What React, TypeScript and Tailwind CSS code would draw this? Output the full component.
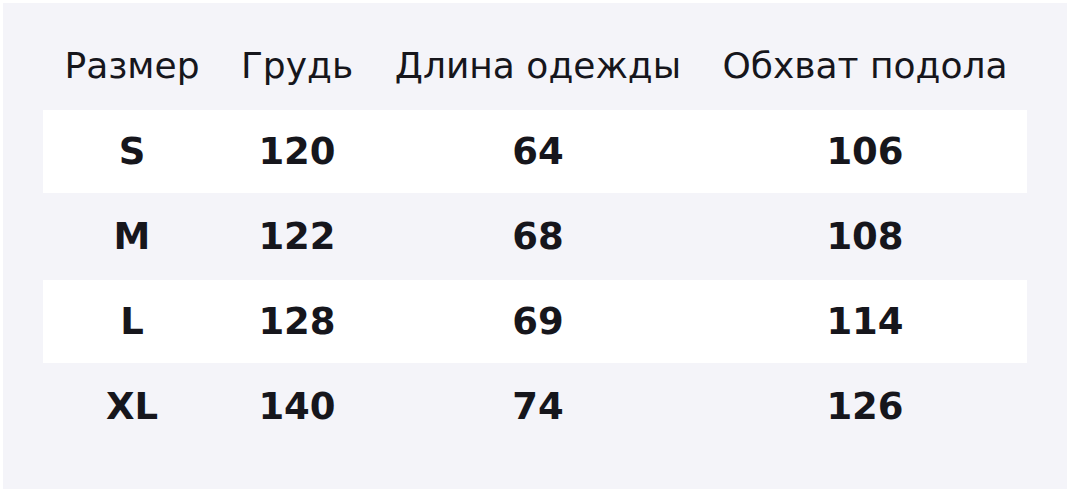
export default function App() {
  const rows = [
    ["S", "120", "64", "106"],
    ["M", "122", "68", "108"],
    ["L", "128", "69", "114"],
    ["XL", "140", "74", "126"],
  ];
  const cols = ["w-[178px]", "w-[152px]", "w-[330px]", "w-[324px]"];
  const heads = ["Размер", "Грудь", "Длина одежды", "Обхват подола"];

  return (
    <div className="w-[1070px] h-[493px] bg-white p-[3px] font-['DejaVu_Sans',sans-serif] text-[#16161c]">
      <div className="w-[1064px] h-[486px] bg-[#f4f4f9] pl-[40px] pt-[19px]">
        <div className="w-[984px]">
          <div className="flex h-[88px] items-center text-[36px]">
            {heads.map((h, i) => (
              <div key={h} className={`${cols[i]} text-center`}>{h}</div>
            ))}
          </div>
          {rows.map((r, ri) => (
            <div
              key={r[0]}
              className={`flex items-center text-[37px] font-bold ${ri % 2 === 0 ? "h-[83px] bg-white" : "h-[87px]"}`}
            >
              {r.map((c, i) => (
                <div key={i} className={`${cols[i]} text-center`}>{c}</div>
              ))}
            </div>
          ))}
        </div>
      </div>
    </div>
  );
}
